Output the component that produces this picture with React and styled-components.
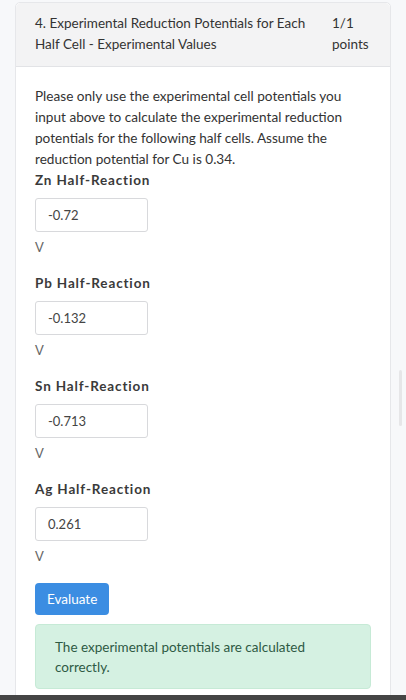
import React from "react";
import styled, { createGlobalStyle } from "styled-components";

const Global = createGlobalStyle`
  html, body { margin: 0; padding: 0; background: #f7f8fa; }
  body { font-family: "Lato", "Open Sans", sans-serif; color: #333; }
`;

const Page = styled.div`
  display: flex;
  height: 700px;
  overflow: hidden;
  position: relative;
`;

const Card = styled.div`
  margin: 2px 0 0 15px;
  width: 376px;
  background: #fff;
  border: 1px solid #e6e7ea;
  border-radius: 5px 5px 0 0;
  box-sizing: border-box;
`;

const Header = styled.div`
  display: flex;
  justify-content: space-between;
  background: #f3f3f4;
  border-bottom: 1px solid #e2e3e6;
  padding: 10px 21px 11px 19px;
  font-size: 13.5px;
  line-height: 21px;
  color: #333;
  border-radius: 5px 5px 0 0;
`;

const Title = styled.div`
  width: 280px;
`;

const Points = styled.div`
  width: 37px;
`;

const Body = styled.div`
  padding: 19px 19px 0 19px;
  display: flex;
  flex-direction: column;
  align-items: flex-start;
`;

const Para = styled.p`
  margin: 0;
  font-size: 13.6px;
  line-height: 21px;
  color: #333;
`;

const Group = styled.div`
  display: flex;
  flex-direction: column;
  align-items: flex-start;
  margin-bottom: ${(p) => (p.$last ? "16px" : "15px")};
`;

const Label = styled.div`
  font-size: 13.5px;
  line-height: 21px;
  font-weight: 700;
  letter-spacing: 0.85px;
  color: #3a3a3a;
  margin-bottom: 7px;
`;

const Input = styled.div`
  width: 113px;
  height: 34px;
  box-sizing: border-box;
  border: 1px solid #d8d9dc;
  border-radius: 3px;
  padding: 0 12px;
  display: flex;
  align-items: center;
  font-size: 13px;
  color: #444;
`;

const Unit = styled.div`
  font-size: 13px;
  line-height: 21px;
  color: #666;
  margin-top: 5px;
`;

const Button = styled.button`
  height: 32px;
  padding: 0 12px;
  border: none;
  border-radius: 4px;
  background: #3b8de2;
  color: #fff;
  font-family: inherit;
  font-size: 13.5px;
  margin-bottom: 9px;
`;

const Alert = styled.div`
  align-self: stretch;
  background: #d5f1e2;
  border: 1px solid #c6ead6;
  border-radius: 4px;
  padding: 12px 19px 11px 19px;
  font-size: 13.5px;
  line-height: 20px;
  color: #2e5a44;
`;

const BottomBar = styled.div`
  position: absolute;
  left: 0;
  right: 0;
  bottom: 0;
  height: 5px;
  background: #454545;
`;

const Thumb = styled.div`
  position: absolute;
  right: 4px;
  top: 370px;
  width: 3px;
  height: 56px;
  background: #e6e6e8;
  border-radius: 2px;
`;

const groups = [
  { name: "Zn Half-Reaction", value: "-0.72" },
  { name: "Pb Half-Reaction", value: "-0.132" },
  { name: "Sn Half-Reaction", value: "-0.713" },
  { name: "Ag Half-Reaction", value: "0.261" },
];

export default function App() {
  return (
    <>
      <Global />
      <Page>
        <Card>
          <Header>
            <Title>4. Experimental Reduction Potentials for Each Half Cell - Experimental Values</Title>
            <Points>1/1 points</Points>
          </Header>
          <Body>
            <Para>
              Please only use the experimental cell potentials you input above to calculate the experimental
              reduction potentials for the following half cells. Assume the reduction potential for Cu is 0.34.
            </Para>
            {groups.map((g, i) => (
              <Group key={g.name} $last={i === groups.length - 1}>
                <Label>{g.name}</Label>
                <Input>{g.value}</Input>
                <Unit>V</Unit>
              </Group>
            ))}
            <Button>Evaluate</Button>
            <Alert>The experimental potentials are calculated correctly.</Alert>
          </Body>
        </Card>
        <Thumb />
        <BottomBar />
      </Page>
    </>
  );
}
